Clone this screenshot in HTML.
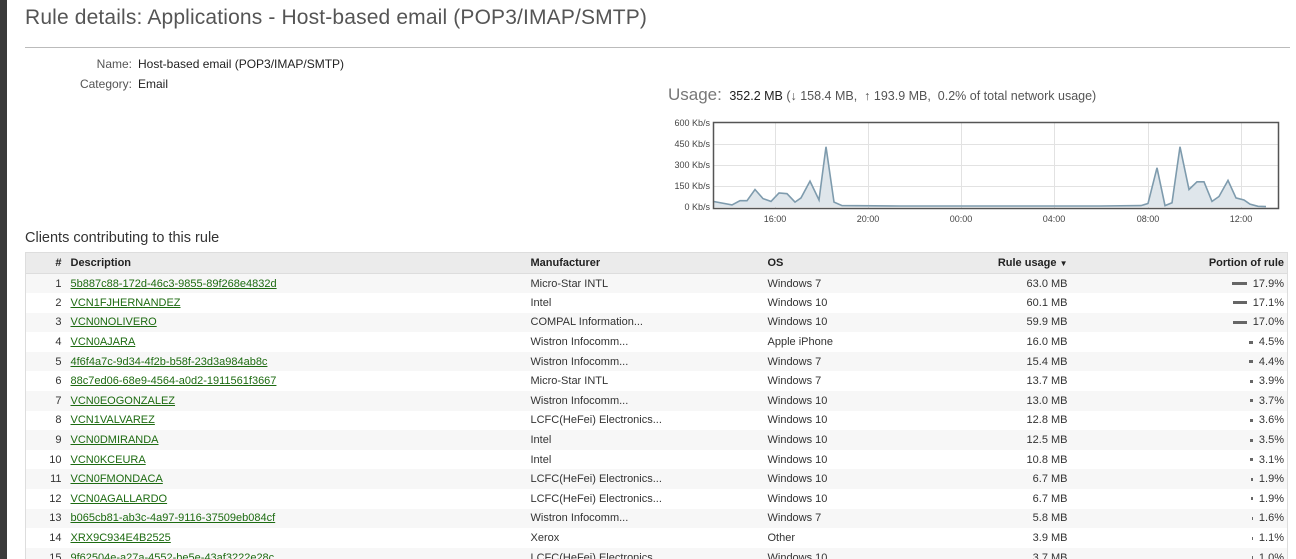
<!DOCTYPE html>
<html><head><meta charset="utf-8"><style>
*{margin:0;padding:0;box-sizing:border-box}
html,body{width:1296px;height:559px;overflow:hidden}
body{background:#fff;font-family:"Liberation Sans",Arial,sans-serif;color:#222;position:relative}
.strip{position:absolute;left:0;top:0;width:7px;height:559px;background:#3a3a3a}
h1{position:absolute;left:25px;top:6px;font-size:21px;font-weight:normal;color:#555;letter-spacing:0.15px}
.hr{position:absolute;left:25px;top:47px;width:1265px;height:1px;background:#bbb}
.lbl{position:absolute;font-size:12px;color:#555;text-align:right;width:110px;left:22px}
.val{position:absolute;font-size:12px;color:#222;left:138px}
.usage{position:absolute;left:668px;top:85px;font-size:12.5px;color:#555}
.usage b{font-size:17px;font-weight:normal;color:#777;margin-right:4px}
.usage span{color:#222}
.ct{position:absolute;left:25px;top:230px;font-size:14.5px;color:#333}
table{position:absolute;left:25px;top:252px;width:1263px;border-collapse:collapse;font-size:11px;border:1px solid #ddd;border-bottom:none}
th{background:#ebebeb;height:21px;text-align:left;font-weight:bold;color:#222;border-bottom:1px solid #ddd}
td{height:19.6px;color:#333}
tr:nth-child(even) td{background:#f7f7f7}
td a{color:#1d6b11;text-decoration:underline}
.n{text-align:right;padding-right:9px;width:45px}
.r{text-align:right}
.bar{display:inline-block;height:3px;background:#666;vertical-align:middle;margin-right:6px}
</style></head><body>
<div class="strip"></div>
<h1>Rule details: Applications - Host-based email (POP3/IMAP/SMTP)</h1>
<div class="hr"></div>
<div class="lbl" style="top:57px">Name:</div><div class="val" style="top:57px">Host-based email (POP3/IMAP/SMTP)</div>
<div class="lbl" style="top:77px">Category:</div><div class="val" style="top:77px">Email</div>
<div class="usage"><b>Usage:</b> <span>352.2 MB</span> (↓ 158.4 MB, &nbsp;↑ 193.9 MB, &nbsp;0.2% of total network usage)</div>
<svg style="position:absolute;left:0;top:0" width="1296" height="230">
<g font-family="Liberation Sans,Arial,sans-serif" font-size="9" fill="#444" text-anchor="end">
<text x="710" y="126">600 Kb/s</text><text x="710" y="147">450 Kb/s</text><text x="710" y="168">300 Kb/s</text><text x="710" y="189">150 Kb/s</text><text x="710" y="210">0 Kb/s</text>
</g>
<g font-family="Liberation Sans,Arial,sans-serif" font-size="9" fill="#444" text-anchor="middle">
<text x="775" y="222">16:00</text><text x="868" y="222">20:00</text><text x="961" y="222">00:00</text><text x="1054" y="222">04:00</text><text x="1148" y="222">08:00</text><text x="1241" y="222">12:00</text>
</g>
<g stroke="#e2e2e2" stroke-width="1">
<line x1="775.5" y1="123" x2="775.5" y2="208"/><line x1="868.5" y1="123" x2="868.5" y2="208"/><line x1="961.5" y1="123" x2="961.5" y2="208"/><line x1="1054.5" y1="123" x2="1054.5" y2="208"/><line x1="1148.5" y1="123" x2="1148.5" y2="208"/><line x1="1241.5" y1="123" x2="1241.5" y2="208"/>
<line x1="713" y1="144.5" x2="1278" y2="144.5"/><line x1="713" y1="165.5" x2="1278" y2="165.5"/><line x1="713" y1="186.5" x2="1278" y2="186.5"/>
</g>
<polygon fill="#dfe6eb" points="713,207 713,201.4 732,204.9 740,200.7 747,200.7 755,189.5 763,198.6 771,201.4 779,193 787,193.7 795,202.1 801,197.9 810,181.1 819,200 826,146.8 834,202.1 842,205.6 900,206 1000,206 1100,206 1141,205.6 1148,203.5 1157,167.8 1165,205.6 1172,202.8 1180,146.8 1189,189.5 1197,181.8 1204,181.8 1212,201.4 1219,196.5 1228,180.4 1236,197.9 1244,200 1250,204.2 1258,206.3 1266,206.6 1266,207"/>
<polyline fill="none" stroke="#7e9bad" stroke-width="1.6" points="713,201.4 732,204.9 740,200.7 747,200.7 755,189.5 763,198.6 771,201.4 779,193 787,193.7 795,202.1 801,197.9 810,181.1 819,200 826,146.8 834,202.1 842,205.6 900,206 1000,206 1100,206 1141,205.6 1148,203.5 1157,167.8 1165,205.6 1172,202.8 1180,146.8 1189,189.5 1197,181.8 1204,181.8 1212,201.4 1219,196.5 1228,180.4 1236,197.9 1244,200 1250,204.2 1258,206.3 1266,206.6"/>
<rect x="713.5" y="122.5" width="565" height="86" fill="none" stroke="#555" stroke-width="1.5"/>
</svg>
<div class="ct">Clients contributing to this rule</div>
<table>
<tr><th class="n">#</th><th style="width:460px">Description</th><th style="width:237px">Manufacturer</th><th style="width:150px">OS</th><th class="r" style="width:150px">Rule usage <span style="font-size:8px">▼</span></th><th class="r" style="padding-right:3px">Portion of rule</th></tr>
<tr><td class="n">1</td><td><a>5b887c88-172d-46c3-9855-89f268e4832d</a></td><td>Micro-Star INTL</td><td>Windows 7</td><td class="r">63.0 MB</td><td class="r" style="padding-right:3px"><span class="bar" style="width:15px"></span>17.9%</td></tr>
<tr><td class="n">2</td><td><a>VCN1FJHERNANDEZ</a></td><td>Intel</td><td>Windows 10</td><td class="r">60.1 MB</td><td class="r" style="padding-right:3px"><span class="bar" style="width:14px"></span>17.1%</td></tr>
<tr><td class="n">3</td><td><a>VCN0NOLIVERO</a></td><td>COMPAL Information...</td><td>Windows 10</td><td class="r">59.9 MB</td><td class="r" style="padding-right:3px"><span class="bar" style="width:14px"></span>17.0%</td></tr>
<tr><td class="n">4</td><td><a>VCN0AJARA</a></td><td>Wistron Infocomm...</td><td>Apple iPhone</td><td class="r">16.0 MB</td><td class="r" style="padding-right:3px"><span class="bar" style="width:4px"></span>4.5%</td></tr>
<tr><td class="n">5</td><td><a>4f6f4a7c-9d34-4f2b-b58f-23d3a984ab8c</a></td><td>Wistron Infocomm...</td><td>Windows 7</td><td class="r">15.4 MB</td><td class="r" style="padding-right:3px"><span class="bar" style="width:4px"></span>4.4%</td></tr>
<tr><td class="n">6</td><td><a>88c7ed06-68e9-4564-a0d2-1911561f3667</a></td><td>Micro-Star INTL</td><td>Windows 7</td><td class="r">13.7 MB</td><td class="r" style="padding-right:3px"><span class="bar" style="width:3px"></span>3.9%</td></tr>
<tr><td class="n">7</td><td><a>VCN0EOGONZALEZ</a></td><td>Wistron Infocomm...</td><td>Windows 10</td><td class="r">13.0 MB</td><td class="r" style="padding-right:3px"><span class="bar" style="width:3px"></span>3.7%</td></tr>
<tr><td class="n">8</td><td><a>VCN1VALVAREZ</a></td><td>LCFC(HeFei) Electronics...</td><td>Windows 10</td><td class="r">12.8 MB</td><td class="r" style="padding-right:3px"><span class="bar" style="width:3px"></span>3.6%</td></tr>
<tr><td class="n">9</td><td><a>VCN0DMIRANDA</a></td><td>Intel</td><td>Windows 10</td><td class="r">12.5 MB</td><td class="r" style="padding-right:3px"><span class="bar" style="width:3px"></span>3.5%</td></tr>
<tr><td class="n">10</td><td><a>VCN0KCEURA</a></td><td>Intel</td><td>Windows 10</td><td class="r">10.8 MB</td><td class="r" style="padding-right:3px"><span class="bar" style="width:3px"></span>3.1%</td></tr>
<tr><td class="n">11</td><td><a>VCN0FMONDACA</a></td><td>LCFC(HeFei) Electronics...</td><td>Windows 10</td><td class="r">6.7 MB</td><td class="r" style="padding-right:3px"><span class="bar" style="width:2px"></span>1.9%</td></tr>
<tr><td class="n">12</td><td><a>VCN0AGALLARDO</a></td><td>LCFC(HeFei) Electronics...</td><td>Windows 10</td><td class="r">6.7 MB</td><td class="r" style="padding-right:3px"><span class="bar" style="width:2px"></span>1.9%</td></tr>
<tr><td class="n">13</td><td><a>b065cb81-ab3c-4a97-9116-37509eb084cf</a></td><td>Wistron Infocomm...</td><td>Windows 7</td><td class="r">5.8 MB</td><td class="r" style="padding-right:3px"><span class="bar" style="width:1px"></span>1.6%</td></tr>
<tr><td class="n">14</td><td><a>XRX9C934E4B2525</a></td><td>Xerox</td><td>Other</td><td class="r">3.9 MB</td><td class="r" style="padding-right:3px"><span class="bar" style="width:1px"></span>1.1%</td></tr>
<tr><td class="n">15</td><td><a>9f62504e-a27a-4552-be5e-43af3222e28c</a></td><td>LCFC(HeFei) Electronics...</td><td>Windows 10</td><td class="r">3.7 MB</td><td class="r" style="padding-right:3px"><span class="bar" style="width:1px"></span>1.0%</td></tr>
</table>
</body></html>
